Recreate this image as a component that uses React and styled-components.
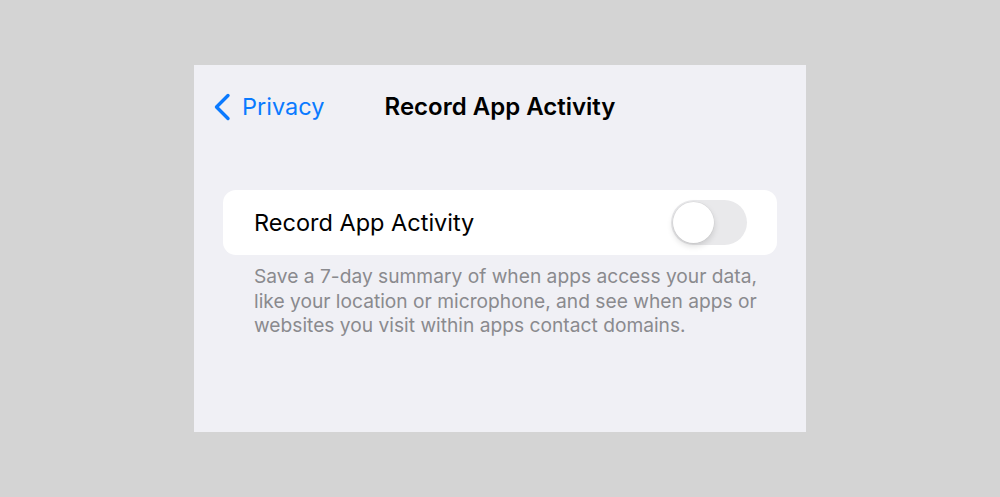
import React, { useState } from "react";
import styled, { createGlobalStyle } from "styled-components";

const Global = createGlobalStyle`
  html, body {
    margin: 0;
    padding: 0;
    background: #d4d4d4;
  }
  body {
    font-family: Inter, "Noto Sans", "Liberation Sans", sans-serif;
    -webkit-font-smoothing: antialiased;
  }
`;

const Stage = styled.div`
  min-height: 100vh;
  display: flex;
  align-items: center;
  justify-content: center;
`;

const Screen = styled.div`
  width: 612px;
  height: 367px;
  background: #f0f0f5;
  display: flex;
  flex-direction: column;
  box-sizing: border-box;
`;

const NavBar = styled.header`
  position: relative;
  height: 82px;
  display: flex;
  align-items: center;
  justify-content: center;
  box-sizing: border-box;
`;

const BackButton = styled.button`
  position: absolute;
  left: 19px;
  top: 27px;
  display: flex;
  align-items: center;
  gap: 11px;
  border: 0;
  background: none;
  padding: 0;
  color: #0a7aff;
  font: inherit;
  font-size: 23.5px;
  cursor: pointer;
`;

const Title = styled.h1`
  margin: 0;
  font-size: 24px;
  font-weight: 600;
  color: #000;
`;

const Content = styled.div`
  padding: 43px 29px 0;
`;

const Card = styled.div`
  background: #fff;
  border-radius: 13px;
  height: 65px;
  display: flex;
  align-items: center;
  justify-content: space-between;
  padding: 0 30px 0 31px;
`;

const Label = styled.span`
  font-size: 23.5px;
  color: #000;
`;

const Track = styled.button`
  position: relative;
  width: 76px;
  height: 45px;
  border-radius: 23px;
  border: 0;
  padding: 0;
  background: ${(p) => (p.$on ? "#34c759" : "#e9e9eb")};
  cursor: pointer;
`;

const Knob = styled.span`
  position: absolute;
  top: 2px;
  left: ${(p) => (p.$on ? "33px" : "2px")};
  width: 41px;
  height: 41px;
  border-radius: 50%;
  background: #fff;
  box-shadow: 0 3px 6px rgba(0, 0, 0, 0.14), 0 0 0 0.5px rgba(0, 0, 0, 0.06);
`;

const Footnote = styled.p`
  margin: 9px 0 0 31px;
  width: 525px;
  font-size: 19.2px;
  line-height: 24.5px;
  color: #8a8a8e;
`;

function Chevron() {
  return (
    <svg width="18" height="28" viewBox="0 0 18 28" fill="none">
      <path
        d="M15 2.5 L3.5 14 L15 25.5"
        stroke="#0a7aff"
        strokeWidth="3.4"
        strokeLinecap="round"
        strokeLinejoin="round"
      />
    </svg>
  );
}

export default function App() {
  const [on, setOn] = useState(false);
  return (
    <>
      <Global />
      <Stage>
        <Screen>
          <NavBar>
            <BackButton>
              <Chevron />
              Privacy
            </BackButton>
            <Title>Record App Activity</Title>
          </NavBar>
          <Content>
            <Card>
              <Label>Record App Activity</Label>
              <Track $on={on} onClick={() => setOn(!on)} aria-pressed={on}>
                <Knob $on={on} />
              </Track>
            </Card>
            <Footnote>
              Save a 7-day summary of when apps access your data, like your
              location or microphone, and see when apps or websites you visit
              within apps contact domains.
            </Footnote>
          </Content>
        </Screen>
      </Stage>
    </>
  );
}
